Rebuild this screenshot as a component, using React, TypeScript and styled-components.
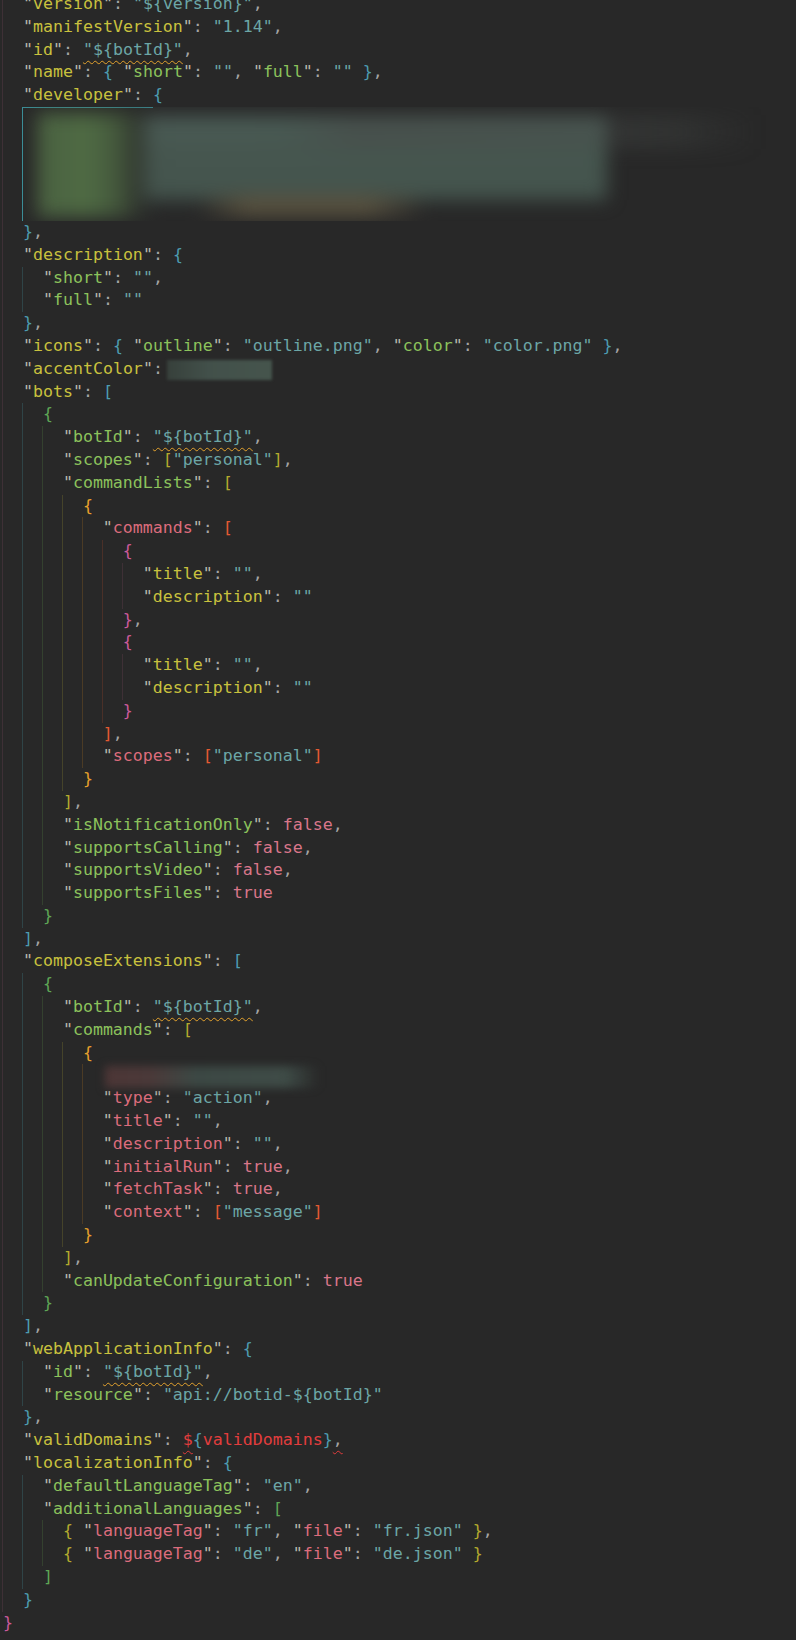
import React from "react";
import styled, { createGlobalStyle, css } from "styled-components";

const tones = {
  key1: "#c8c13e",
  key2: "#8cc25c",
  key3: "#dc6c7c",
  quote: "#b9b9ae",
  str: "#6ca6a6",
  punct: "#a4a4a4",
  bool: "#d9768a",
  err: "#e23d3d",
  b1: "#cc5a9c",
  b2: "#4d9cb0",
  b3: "#5fa656",
  b4: "#b4aa2e",
  b5: "#e7a02c",
  b6: "#e35a32",
};
type Tone = keyof typeof tones;

const bracketTones: Tone[] = ["b1", "b2", "b3", "b4", "b5", "b6"];
const keyTones: Tone[] = ["key1", "key2", "key3"];
const guideColors = ["#3e3036", "#2f4447", "#34412f", "#45432a", "#4b3b25", "#4a3028"];

// § = redacted accent colour, ¶ = redacted command id, @@DEV = redacted developer block
const SOURCE = [
  `  "version": "\${version}",`,
  `  "manifestVersion": "1.14",`,
  `  "id": "\${botId}",`,
  `  "name": { "short": "", "full": "" },`,
  `  "developer": {`,
  `@@DEV`,
  `  },`,
  `  "description": {`,
  `    "short": "",`,
  `    "full": ""`,
  `  },`,
  `  "icons": { "outline": "outline.png", "color": "color.png" },`,
  `  "accentColor": §`,
  `  "bots": [`,
  `    {`,
  `      "botId": "\${botId}",`,
  `      "scopes": ["personal"],`,
  `      "commandLists": [`,
  `        {`,
  `          "commands": [`,
  `            {`,
  `              "title": "",`,
  `              "description": ""`,
  `            },`,
  `            {`,
  `              "title": "",`,
  `              "description": ""`,
  `            }`,
  `          ],`,
  `          "scopes": ["personal"]`,
  `        }`,
  `      ],`,
  `      "isNotificationOnly": false,`,
  `      "supportsCalling": false,`,
  `      "supportsVideo": false,`,
  `      "supportsFiles": true`,
  `    }`,
  `  ],`,
  `  "composeExtensions": [`,
  `    {`,
  `      "botId": "\${botId}",`,
  `      "commands": [`,
  `        {`,
  `          ¶`,
  `          "type": "action",`,
  `          "title": "",`,
  `          "description": "",`,
  `          "initialRun": true,`,
  `          "fetchTask": true,`,
  `          "context": ["message"]`,
  `        }`,
  `      ],`,
  `      "canUpdateConfiguration": true`,
  `    }`,
  `  ],`,
  `  "webApplicationInfo": {`,
  `    "id": "\${botId}",`,
  `    "resource": "api://botid-\${botId}"`,
  `  },`,
  `  "validDomains": \${validDomains},`,
  `  "localizationInfo": {`,
  `    "defaultLanguageTag": "en",`,
  `    "additionalLanguages": [`,
  `      { "languageTag": "fr", "file": "fr.json" },`,
  `      { "languageTag": "de", "file": "de.json" }`,
  `    ]`,
  `  }`,
  `}`,
];

type Token = {
  text: string;
  tone?: Tone;
  mark?: "warn" | "error";
  redact?: "accent" | "command";
};

function tokenize(src: string, stack: string[]): Token[] {
  const out: Token[] = [];
  let i = 0;
  let broken = false;
  while (i < src.length) {
    const ch = src[i];
    if (ch === " ") {
      let j = i;
      while (src[j] === " ") j++;
      out.push({ text: src.slice(i, j) });
      i = j;
    } else if (ch === "§") {
      out.push({ text: "", redact: "accent" });
      i++;
    } else if (ch === "¶") {
      out.push({ text: "", redact: "command" });
      i++;
    } else if (ch === "{" || ch === "[") {
      stack.push(ch);
      out.push({ text: ch, tone: bracketTones[(stack.length - 1) % 6] });
      i++;
    } else if (ch === "}" || ch === "]") {
      out.push({ text: ch, tone: bracketTones[(stack.length - 1) % 6] });
      stack.pop();
      i++;
    } else if (ch === '"') {
      const j = src.indexOf('"', i + 1);
      const s = src.slice(i, j + 1);
      let k = j + 1;
      while (src[k] === " ") k++;
      if (src[k] === ":") {
        const depth = stack.filter((b) => b === "{").length;
        out.push(
          { text: '"', tone: "quote" },
          { text: s.slice(1, -1), tone: keyTones[(depth - 1) % 3] },
          { text: '"', tone: "quote" }
        );
      } else {
        out.push({ text: s, tone: "str", mark: s === '"${botId}"' ? "warn" : undefined });
      }
      i = j + 1;
    } else if (ch === ":") {
      out.push({ text: ":", tone: "punct" });
      i++;
    } else if (ch === ",") {
      out.push({ text: ",", tone: "punct", mark: broken ? "error" : undefined });
      i++;
    } else if (ch === "$") {
      broken = true;
      out.push({ text: "$", tone: "err", mark: "error" });
      i++;
    } else {
      let j = i;
      while (j < src.length && /[A-Za-z0-9_.]/.test(src[j])) j++;
      const w = src.slice(i, Math.max(j, i + 1));
      out.push({ text: w, tone: w === "true" || w === "false" ? "bool" : "err" });
      i += w.length;
    }
  }
  return out;
}

const GlobalStyle = createGlobalStyle`
  html, body {
    margin: 0;
    padding: 0;
    background: #282828;
  }
  body {
    overflow: hidden;
  }
`;

const Editor = styled.div`
  margin-top: -7px;
  padding-left: 2px;
  background: #282828;
  min-height: 1650px;
  font-family: "DejaVu Sans Mono", "Liberation Mono", monospace;
  font-size: 16.6px;
  line-height: 22.8px;
  color: #a4a4a4;
`;

const LineRow = styled.div`
  display: flex;
  height: 22.8px;
  white-space: pre;
`;

const Guide = styled.span<{ $color: string }>`
  flex: none;
  box-sizing: border-box;
  width: 2ch;
  border-left: 1px solid ${(p) => p.$color};
`;

const Code = styled.span`
  padding-left: 1px;
  white-space: pre;
`;

const Tok = styled.span<{ $tone?: Tone; $mark?: "warn" | "error" }>`
  color: ${(p) => (p.$tone ? tones[p.$tone] : "inherit")};
  ${(p) =>
    p.$mark &&
    css`
      text-decoration: underline wavy ${p.$mark === "warn" ? "#e3a22d" : "#e23b3b"};
      text-decoration-thickness: 1px;
      text-underline-offset: 5px;
      text-decoration-skip-ink: none;
    `}
`;

const Redaction = styled.span<{ $variant: "accent" | "command" }>`
  display: inline-block;
  vertical-align: top;
  ${(p) =>
    p.$variant === "accent"
      ? css`
          width: 105px;
          height: 20px;
          margin: 2px 0 0 -6px;
          background: linear-gradient(90deg, #37403b 0, #42504a 40%, #45544c 100%);
          filter: blur(1.5px);
        `
      : css`
          width: 215px;
          height: 22px;
          margin: 2px 0 0 2px;
          background: linear-gradient(
            90deg,
            #4d3636 0,
            #4b3939 45px,
            #3c4844 90px,
            #3f4c47 180px,
            rgba(60, 72, 68, 0) 215px
          );
          filter: blur(4px);
        `}
`;

const DevRow = styled.div`
  display: flex;
  height: 114px;
`;

const ActiveGuide = styled.div`
  flex: 1;
  border-left: 1px solid #3b8d96;
  overflow: hidden;
`;

const TopRule = styled.div`
  width: 130px;
  border-top: 1px solid #3b8d96;
`;

const BlurBlock = styled.div`
  width: 720px;
  height: 104px;
  margin: 5px 0 0 14px;
  background:
    linear-gradient(90deg, transparent 160px, #57503e 210px, #57503e 330px, transparent 390px)
      0 100% / 100% 22px no-repeat,
    linear-gradient(90deg, transparent 240px, rgba(70, 74, 72, 0.55) 320px, rgba(70, 74, 72, 0.3) 640px, transparent 720px)
      0 2px / 100% 34px no-repeat,
    linear-gradient(90deg, #4a6141 0, #4f6b44 50px, #44583c 80px, #31372f 100px, transparent 115px)
      0 0 / 100% 100% no-repeat,
    linear-gradient(180deg, #4b5c56 0, #46564f 40%, #44544d 100%)
      100px 3px / 470px 84px no-repeat;
  filter: blur(9px);
`;

function CodeLine({ src, stack }: { src: string; stack: string[] }) {
  const lead = src.length - src.trimStart().length;
  const levels = Math.floor(lead / 2);
  const tokens = tokenize(src.slice(levels * 2), stack);
  return (
    <LineRow>
      {Array.from({ length: levels }, (_, j) => (
        <Guide key={j} $color={guideColors[j % 6]} />
      ))}
      <Code>
        {tokens.map((t, k) =>
          t.redact ? (
            <Redaction key={k} $variant={t.redact} />
          ) : (
            <Tok key={k} $tone={t.tone} $mark={t.mark}>
              {t.text}
            </Tok>
          )
        )}
      </Code>
    </LineRow>
  );
}

export default function App() {
  const stack: string[] = ["{"];
  return (
    <>
      <GlobalStyle />
      <Editor>
        {SOURCE.map((src, n) =>
          src === "@@DEV" ? (
            <DevRow key={n}>
              <Guide $color={guideColors[0]} />
              <ActiveGuide>
                <TopRule />
                <BlurBlock />
              </ActiveGuide>
            </DevRow>
          ) : (
            <CodeLine key={n} src={src} stack={stack} />
          )
        )}
      </Editor>
    </>
  );
}
